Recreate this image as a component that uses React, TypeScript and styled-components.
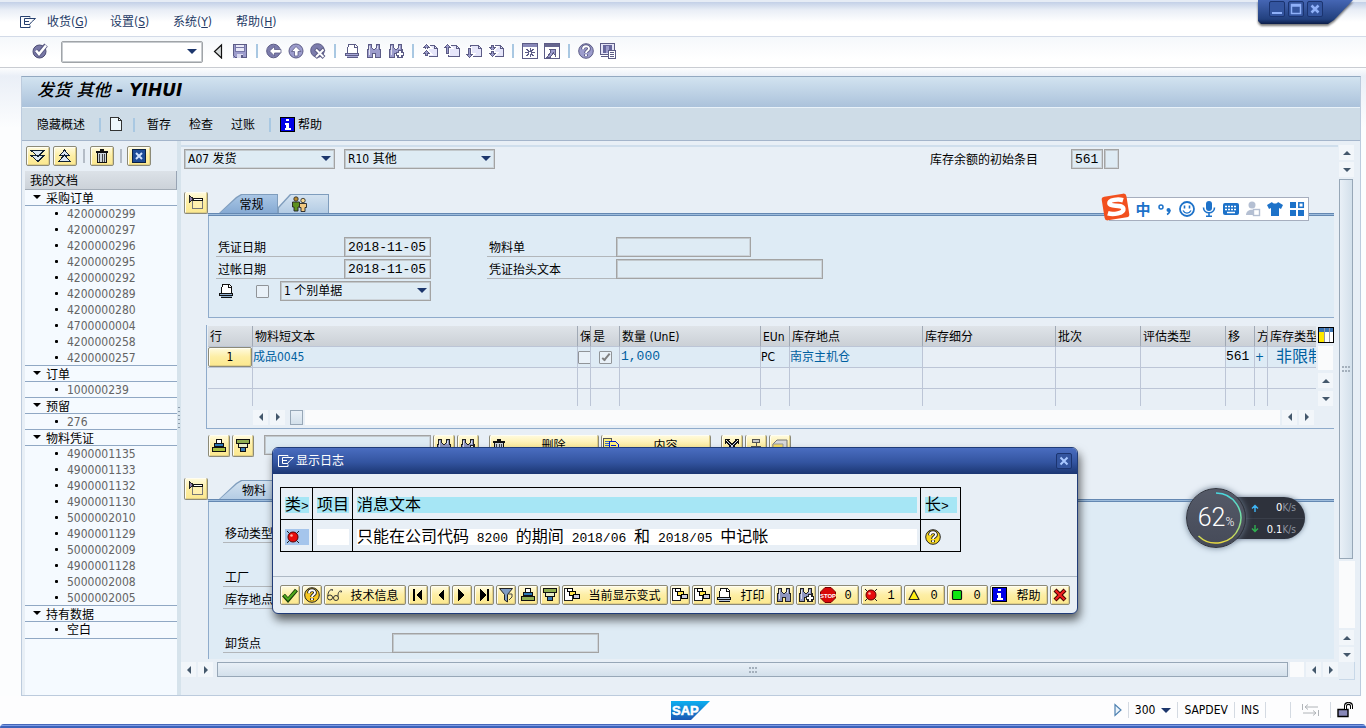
import React from 'react';
import styled, { createGlobalStyle, css } from 'styled-components';

const UI = `"DejaVu Sans Condensed", "DejaVu Sans", "Noto Sans CJK SC", sans-serif`;
const MONO = `"Liberation Mono", "Noto Sans CJK SC", monospace`;

const Global = createGlobalStyle`
  *, *::before, *::after { box-sizing: border-box; }
  body { margin: 0; background: #fdfdfe; color: #000; font: 12px/16px ${UI}; }
  button, input, select { font: inherit; color: inherit; margin: 0; padding: 0; border-radius: 0; }
  button { background: none; border: 0; cursor: pointer; white-space: nowrap; }
  svg { display: block; flex: none; }
  ul { list-style: none; margin: 0; padding: 0; }
`;

/* ---------- icons ---------- */

const Svg = ({ w = 16, h = 16, crisp = false, children }: { w?: number; h?: number; crisp?: boolean; children: React.ReactNode }) => (
  <svg width={w} height={h} viewBox={`0 0 ${w} ${h}`} fill="none" shapeRendering={crisp ? 'crispEdges' : 'auto'} aria-hidden="true">
    {children}
  </svg>
);

const P = '#9c9ccc';
const D = '#5c5c86';

const MenuIcon = ({ color = '#26406f' }: { color?: string }) => (
  <Svg h={14}>
    <path d="M10 2.5V1.5H.5v11h9.500v-2" stroke={color} />
    <path d="M12 3.5H4.5v6H10M5 6.5h4M12 3.5h3.500l-4 3.500-2 2.500" stroke={color} />
  </Svg>
);
const EnterIcon = () => (
  <Svg>
    <circle cx="7.5" cy="8.5" r="6.5" fill="#7878a6" stroke="#4b4b73" />
    <path d="M4 7.5l3 3.500 7-9" stroke={D} strokeWidth="4.5" />
    <path d="M4 7.5l3 3.500 7-8.500" stroke="#fff" strokeWidth="2.5" />
  </Svg>
);
const CollapseIcon = () => (
  <Svg><path d="M11.5 2v13L4.5 8.500z" fill="#d8dcdc" stroke="#111" strokeWidth="1.2" /></Svg>
);
const SaveIcon = () => (
  <Svg crisp>
    <path d="M1 1h14v14H1z" fill={P} /><path d="M1.5 1.5h13v13H3.500l-2-2z" stroke={D} />
    <path d="M4 2h8v6H4z" fill="#e9e9f8" /><path d="M3.5 2v6.500h9V2M4 4.500h8" stroke="#7777a8" />
    <path d="M5 11h6v4H5z" fill="#dcdcf0" /><path d="M9 12h2v3H9z" fill={D} />
  </Svg>
);
const BackIcon = () => (
  <Svg><circle cx="7.5" cy="8" r="6.8" fill="#7c7cac" stroke={D} />
    <path d="M3.500 8l5-4.500v3H15v3.500H8.500v3z" fill="#fff" stroke={D} strokeWidth=".8" /></Svg>
);
const ExitIcon = () => (
  <Svg><circle cx="8" cy="8" r="7" fill={P} stroke={D} />
    <path d="M8 3.500l5 5h-3V13H6.500V8.500H3.500z" fill="#fff" stroke={D} strokeWidth=".8" /></Svg>
);
const CancelIcon = () => (
  <Svg><circle cx="7.5" cy="7.5" r="6.8" fill="#7c7cac" stroke={D} />
    <path d="M5.500 6l8.500 8.500M14 6l-8.500 8.500" stroke={D} strokeWidth="4" /><path d="M6 6.500l7.500 7.500M13.500 6.500L6 14" stroke="#fff" strokeWidth="2" /></Svg>
);
const PrintIcon = ({ c = D, f = '#a8a8d8' }: { c?: string; f?: string }) => (
  <Svg crisp>
    <path d="M4.5 1.500h7l2 2V10h-10V6z" fill="#fff" stroke={c} /><path d="M10.500 1.500v3h3" stroke={c} />
    <path d="M1.500 10.500h13v2h-13z" fill={f} stroke={c} /><path d="M2.500 14.500h11" stroke={c} /><path d="M2.500 13.500h11" stroke={f} />
  </Svg>
);
const FindIcon = ({ plus, c = D, f = P }: { plus?: boolean; c?: string; f?: string }) => (
  <Svg crisp>
    <path d="M2.500 1.500h3v3l2 2h1l2-2v-3h3v4l1 2v7h-5v-4h-3v4h-5v-7l1-2z" fill={f} stroke={c} />
    <path d="M3.500 3v9M11.500 3v3" stroke="#fff" opacity=".7" />
    {plus && <path d="M10.500 7.500h3v2h2v3h-2v2h-3v-2h-2v-3h2z" fill="#fff" stroke={c} />}
  </Svg>
);
const PageNavIcon = ({ children }: { children: React.ReactNode }) => (
  <Svg crisp>
    <path d="M4.500 2.500h8l3 3v8h-11z" fill="#e6e6fa" stroke={D} /><path d="M12.500 2.500v3h3" stroke={D} />
    {children}
  </Svg>
);
const Chevron = ({ d }: { d: string }) => (
  <><path d={d} stroke="#fff" strokeWidth="3" /><path d={d} fill={P} stroke={D} /></>
);
const FIRST_A = 'M4.500 1.500l-3 3h2v2h2v-2h2z';
const FIRST_B = 'M4.500 7.500l-3 3h2v2h2v-2h2z';
const PREV = 'M3.500 1.500l-3 3h2v6h2v-6h2z';
const NEXT = 'M3.500 14.500l-3-3h2v-6h2v6h2z';
const LAST_A = 'M4.500 7.500l-3-3h2v-2h2v2h2z';
const LAST_B = 'M4.500 13.500l-3-3h2v-2h2v2h2z';
const SessionIcon = () => (
  <Svg crisp><path d="M.500 .500h15v15H.500z" fill="#fff" stroke={D} /><path d="M1 1h14v3H1z" fill="#8888b8" />
    <path d="M8 5v9M3 9.500h10M4.500 6l7 7M11.500 6l-7 7" stroke={D} /><path d="M7 8.500h2v2H7z" fill="#fff" /></Svg>
);
const ShortcutIcon = () => (
  <Svg crisp><path d="M.500 .500h15v15H.500z" fill="#fff" stroke={D} /><path d="M1 1h14v3H1z" fill="#66668f" />
    <path d="M5.500 6.500H11v5.500l-1.500-2-3 4H3l4-5z" fill={P} stroke={D} /></Svg>
);
const HelpIcon = ({ c = D, f = P }: { c?: string; f?: string }) => (
  <Svg><circle cx="8" cy="8" r="7.3" fill={f} stroke={c} />
    <path d="M5 6.300c0-4 6-4 6-.6 0 2.200-3 2-3 4.300M8 11.200v2" stroke={c} strokeWidth="3.8" />
    <path d="M5 6.300c0-4 6-4 6-.6 0 2.200-3 2-3 4.300M8 11.300v1.800" stroke="#fff" strokeWidth="1.9" /></Svg>
);
const LayoutIcon = () => (
  <Svg crisp><path d="M.500 .500h14v11H.500z" fill="#e4e4f6" stroke={D} /><path d="M3 2h9v8H3z" fill="#66669c" /><path d="M6 3h3v7H6z" fill={P} />
    <path d="M1 13.500h7" stroke={D} /><path d="M8.500 7.500h7v8h-7z" fill="#fff" stroke={D} /><path d="M10 9.500h4M10 11.500h4M10 13.500h4" stroke={D} /></Svg>
);
const NewPageIcon = () => (
  <Svg w={13} h={16} crisp><path d="M.500 .500h8l3 3v10H.500z" fill="#eef8fc" stroke="#333" /><path d="M8.500 .500v3h3" stroke="#333" /></Svg>
);
const InfoIcon = () => (
  <Svg crisp><path d="M.500 .500h14v14H.500z" fill="#0000e8" stroke="#000" /><path d="M6 2h3v2H6zM5 6h4v5h2v2H5v-2h1V8H5z" fill="#fff" /></Svg>
);
const ExpandIcon = () => (
  <Svg crisp><path d="M1 2.500h13l-6 6zM1 7.500h13l-6 6z" fill="#dce8f4" stroke="#123" /></Svg>
);
const ShrinkIcon = () => (
  <Svg crisp><path d="M7.500 2L12 7.500H3zM7.500 7l6 6.500h-12z" fill="#dce8f4" stroke="#123" /></Svg>
);
const TrashIcon = () => (
  <Svg crisp><path d="M3.500 4.500h9v10h-9z" fill="#ccd4dc" stroke="#111" /><path d="M2 3.500h12M6 1.500h4" stroke="#111" strokeWidth="2" />
    <path d="M5.500 6v8M8 6v8M10.500 6v8" stroke="#444" /></Svg>
);
const CloseBoxIcon = () => (
  <Svg crisp><path d="M1.500 1.500h13v13h-13z" fill="#1e4c98" stroke="#0b2144" /><path d="M5 5l6 6M11 5l-6 6" stroke="#cfe2ff" strokeWidth="2" shapeRendering="auto" /></Svg>
);
const HeaderToggleIcon = () => (
  <Svg crisp><path d="M4.500 5.500h10v8h-10z" fill="#fff0b0" stroke="#777" /><path d="M4.500 3.500h10v2h-10z" fill="#fff" stroke="#111" />
    <path d="M1.500 .500v7l4-3.500z" fill="#8c7aa8" stroke="#222" /></Svg>
);
const PeopleIcon = () => (
  <Svg w={18}>
    <circle cx="5" cy="3" r="2.2" fill="#b88a30" stroke="#222" strokeWidth=".8" /><path d="M1.500 6h7v5H7v4H3v-4H1.500z" fill="#5c9020" stroke="#222" strokeWidth=".9" />
    <circle cx="12" cy="4.5" r="2.2" fill="#f6d890" stroke="#222" strokeWidth=".8" /><path d="M8.500 7.500h7v4H14v4h-4v-4H8.500z" fill="#f0c880" stroke="#222" strokeWidth=".9" />
  </Svg>
);
const SortAscIcon = ({ b = '#8fae52' }: { b?: string }) => (
  <Svg crisp><path d="M5.500 1.500h5v4h-5z" fill="#fff" stroke="#111" /><path d="M3.500 5.500h9v3h-9z" fill="#2c78b8" stroke="#111" />
    <path d="M1.500 9.500h13v4h-13z" fill={b} stroke="#111" /></Svg>
);
const SortDescIcon = () => (
  <Svg crisp><path d="M1.500 1.500h13v4h-13z" fill="#8fae52" stroke="#111" /><path d="M3.500 5.500h9v4h-9z" fill="#e8efc8" stroke="#111" />
    <path d="M5.500 9.500h5v4h-5z" fill="#3a7cb8" stroke="#111" /></Svg>
);
const CopyIcon = () => (
  <Svg crisp><path d="M.500 .500h8v13h-8z" fill="#fff27a" stroke="#555" /><path d="M2 3h5M2 5h5M2 7h5M2 9h5" stroke="#36c" />
    <path d="M6.500 3.500h6l3 3v8h-9z" fill="#fff27a" stroke="#0018d0" /><path d="M8 7h5M8 9h5M8 11h5" stroke="#0018d0" /></Svg>
);
const CrossArrowsIcon = () => (
  <Svg crisp><path d="M3 3l10 10M13 3L3 13" stroke="#111" strokeWidth="3" /><path d="M3 3l10 10M13 3L3 13" stroke="#cdd8f0" />
    <path d="M1.500 5.500v-4h4M10.500 1.500h4v4M1.500 10.500v4h4M14.500 10.500v4h-4" stroke="#111" /></Svg>
);
const HierIcon = () => (
  <Svg crisp><path d="M4.500 1.500h7v3h-7zM1.500 10.500h5v3h-5zM9.500 10.500h5v3h-5z" fill="#c8c8c8" stroke="#555" /><path d="M8 5v3M3.500 10V8h9v2" stroke="#555" /></Svg>
);
const BoxIcon = () => (
  <Svg><path d="M1 6l4-4h10v8l-4 4H1z" fill="#d8d8d8" stroke="#777" /><path d="M1 6h10v8H1z" fill="#f6dc60" stroke="#999" /><path d="M4 10h5v2H4z" fill="#e07050" /></Svg>
);
const TableCfgIcon = () => (
  <Svg crisp><path d="M.500 .500h15v15H.500z" fill="#fff" stroke="#000" /><path d="M1 1h14v4H1z" fill="#3a74b4" /><path d="M1 5h5v10H1z" fill="#ffe800" />
    <path d="M6.500 1v14M11.500 1v14" stroke="#99a" /></Svg>
);
const CheckIcon = () => (
  <Svg><path d="M1.500 8l4.500 5L14.500 3" stroke="#163c08" strokeWidth="4" /><path d="M2 8.300l4 4.200L14 3.500" stroke="#4fa81c" strokeWidth="2" /></Svg>
);
const GlassesIcon = () => (
  <Svg><circle cx="4" cy="10.5" r="2.5" stroke="#333" /><circle cx="10" cy="11" r="2.5" stroke="#333" /><path d="M6.500 10.500h1M1.800 9C2 5 4 2 6.500 2.500L6 4M12 9.500c0-3 .5-6 3.500-5.500L15 5.500" stroke="#333" /></Svg>
);
const PlayIcon = ({ left, bar }: { left?: boolean; bar?: boolean }) => (
  <Svg crisp>
    {left ? <path d="M12 2v12L6 8z" fill="#000" /> : <path d="M4 2v12l6-6z" fill="#000" />}
    {bar && <path d={left ? 'M3 2h2v12H3z' : 'M11 2h2v12h-2z'} fill="#000" />}
  </Svg>
);
const FilterIcon = () => (
  <Svg><path d="M1.500 1.500h13l-5 6V15l-3-2V7.500z" fill="#7f9cc4" stroke="#222" /><path d="M10 7h4v3l-3 3" stroke="#444" /></Svg>
);
const StackIcon = () => (
  <Svg crisp><path d="M.500 1.500h4v3h4v9h-8z" fill="#fff" stroke="#222" /><path d="M3.500 1.500h5v3h-5z" fill="#fff" stroke="#000" />
    <path d="M5.500 4.500h6v4h-6z" fill="#ffe24a" stroke="#000" /><path d="M9.500 7.500h6v4h-6z" fill="#ccd" stroke="#000" /></Svg>
);
const StopIcon = () => (
  <Svg><path d="M5 .500h6L15.500 5v6L11 15.500H5L.500 11V5z" fill="#d80808" stroke="#700" />
    <text x="8" y="10.500" fontSize="6" fontWeight="700" fill="#fff" textAnchor="middle" fontFamily="Liberation Sans, sans-serif">STOP</text></Svg>
);
const ErrorIcon = () => (
  <Svg><path d="M2 2l3 3M14 2l-3 3M2 14l3-3M14 14l-3-3" stroke="#222" /><circle cx="8" cy="8" r="5" fill="#e80c0c" stroke="#5c0000" /><circle cx="6.5" cy="6.5" r="1.3" fill="#ffb0a0" /></Svg>
);
const WarnIcon = () => (<Svg><path d="M8 3l5 9.500H3z" fill="#ffee10" stroke="#222" strokeWidth="1.2" strokeLinejoin="round" /></Svg>);
const OkIcon = () => (<Svg><rect x="3.5" y="3.5" width="9" height="9" rx="1" fill="#10e810" stroke="#111" strokeWidth="1.2" /></Svg>);
const RedXIcon = () => (
  <Svg><path d="M3 3l10 10M13 3L3 13" stroke="#400" strokeWidth="4.2" /><path d="M3.500 3.500l9 9M12.500 3.500l-9 9" stroke="#f02020" strokeWidth="2.2" /></Svg>
);
const SapLogo = () => (
  <Svg w={39} h={19}>
    <defs><linearGradient id="sap" x1="0" y1="0" x2="0" y2="1"><stop offset="0" stopColor="#0aaef0" /><stop offset="1" stopColor="#1c58b4" /></linearGradient></defs>
    <path d="M0 0h39L20 19H0z" fill="url(#sap)" />
    <text x="1" y="14" fontSize="13" fontWeight="700" fill="#fff" stroke="#fff" strokeWidth=".5" fontFamily="Liberation Sans, sans-serif">SAP</text>
  </Svg>
);
const SendIcon = () => (<Svg w={8} h={14}><path d="M1 1.500v11L7 7z" fill="#eaf3fb" stroke="#4d80b0" strokeWidth="1.2" /></Svg>);
const SwapIcon = () => (<Svg w={17} h={14}><path d="M.500 1v6M3 4h13M6 1.500L3 4l3 2.500M16.500 7v6M1 10h13M11 7.500l3 2.500-3 2.500" stroke="#b0b4b8" /></Svg>);
const LockIcon = () => (
  <Svg w={17}><path d="M1 7.500h10v7H1z" fill="#8888b8" stroke="#000" strokeWidth="1.4" /><path d="M8.500 7V4c0-3.500 6-3.500 6 0v3" stroke="#000" strokeWidth="3" /><path d="M8.500 7V4c0-3.500 6-3.500 6 0v3" stroke="#fff" /></Svg>
);

/* ---------- shared parts ---------- */

const yellow = css`
  background: linear-gradient(#fffbe0, #fdeea4 50%, #fce88e);
  border: 1px solid #8c8a78;
  border-radius: 2px;
  box-shadow: inset 1px 1px 0 #fffdf0, inset -1px -1px 0 #e0cf86;
`;
const YellowButton = styled.button<{ $w: number; $open?: boolean }>`
  ${yellow}
  width: ${p => p.$w}px;
  height: ${p => (p.$open ? 22 : 20)}px;
  flex: none;
  display: flex;
  align-items: center;
  justify-content: center;
  ${p => p.$open && 'border-top: 0;'}
`;
const LabelledButton = styled(YellowButton)`
  justify-content: flex-start;
  padding: 0 1px;
  & > span { flex: 1; text-align: center; padding: 1px 0 0 3px; }
`;
const CountButton = styled(LabelledButton)`font-family: ${MONO};`;

const Separator = styled.span`
  width: 12px;
  height: 14px;
  flex: none;
  background: linear-gradient(#a9c8e2, #a9c8e2) center / 2px 100% no-repeat;
`;

const fieldLook = css`
  height: 20px;
  background: #deebf4;
  border: 1px solid #a3a3a3;
  box-shadow: inset 1px 1px 0 #c2c8cc, inset -1px -1px 0 #cdd4da;
  outline: 0;
`;
const Field = styled.input<{ $w: number }>`
  ${fieldLook}
  width: ${p => p.$w}px;
  flex: none;
  padding: 0 3px;
  font: 13px/16px ${MONO};
`;
const SelectWrap = styled.span<{ $w: number }>`
  position: relative;
  display: block;
  flex: none;
  width: ${p => p.$w}px;
  &::after {
    content: '';
    position: absolute;
    right: 4px;
    top: 7px;
    border: 5px solid transparent;
    border-top-color: #1c366c;
    border-bottom: 0;
    pointer-events: none;
  }
  select { ${fieldLook} appearance: none; width: 100%; padding: 0 3px; }
`;
const Select = ({ w, label, value }: { w: number; label: string; value: string }) => (
  <SelectWrap $w={w}><select aria-label={label} defaultValue={value}><option>{value}</option></select></SelectWrap>
);
const Check = styled.input`
  appearance: none;
  position: relative;
  display: block;
  flex: none;
  width: 13px;
  height: 13px;
  border: 1px solid #909498;
  border-radius: 1px;
  background: #e9f1f8;
  &:checked::after {
    content: '';
    position: absolute;
    left: 4px;
    top: 0;
    width: 4px;
    height: 9px;
    border: solid #808080;
    border-width: 0 2px 2px 0;
    rotate: 40deg;
  }
`;

/* ---------- window chrome ---------- */

const Page = styled.div`
  position: relative;
  min-height: 100vh;
  min-width: 1100px;
  display: flex;
  flex-direction: column;
  overflow: hidden;
`;
const MenuBar = styled.nav`
  height: 37px;
  padding: 5px 0 0 20px;
  display: flex;
  align-items: center;
  border-top: 2px solid #e6ecf5;
  border-bottom: 1px solid #d3dbe8;
  background: linear-gradient(#c3d0e7, #e9eef6 8px, #fff 20px);
  color: #243a66;
`;
const MenuItem = styled.button`
  width: 63px;
  height: 20px;
  text-align: left;
  &:first-of-type { margin-left: 11px; }
`;
const Toolbar = styled.div`
  height: 31px;
  padding: 0 0 2px 29px;
  display: flex;
  align-items: center;
  border-bottom: 1px solid #c9ccd2;
  background: linear-gradient(#f5f8fb, #fff 22px);
`;
const IconButton = styled.button`
  width: 22px;
  height: 22px;
  display: grid;
  place-items: center;
`;
const Command = styled.span`
  position: relative;
  width: 142px;
  margin: 2px 4px 0 10px;
  input { width: 100%; height: 22px; display: block; border: 1px solid #a0a4a8; box-shadow: inset 0 0 0 1px #c8ccd0; border-radius: 2px; background: #fff; outline: 0; padding: 0 4px; }
  &::after { content: ''; position: absolute; right: 6px; top: 8px; border: 5px solid transparent; border-top-color: #1c366c; border-bottom: 0; }
`;
const WindowTab = styled.div`
  position: absolute;
  right: 13px;
  top: 0;
  width: 95px;
  height: 24px;
  filter: drop-shadow(0 2px 1px #0008);
`;
const WindowShape = styled.div`
  height: 100%;
  padding: 1px 0 0 11px;
  display: flex;
  gap: 3px;
  background: linear-gradient(#4566b4, #22407e 80%, #0c1d48);
  clip-path: polygon(0 0, 100% 0, 76px 20px, 70px 24px, 3px 24px, 0 21px);
`;
const WinButton = styled.button`
  width: 16px;
  height: 16px;
  border: 1px solid #1b3470;
  border-radius: 2px;
  background: #34559f;
  display: grid;
  place-items: center;
`;
const Gap = styled.div`
  flex: 1;
  display: flex;
  flex-direction: column;
  background: linear-gradient(#fcfdfe, #eaeff7 8px, #fcfdfe 60px);
`;
const Frame = styled.main`
  flex: 1;
  margin: 8px 5px 0 21px;
  display: flex;
  flex-direction: column;
  border: 1px solid #bccbdd;
  border-top-color: #93a9c1;
  background: #e8eff6;
`;
const TitleBar = styled.h1`
  margin: 0;
  height: 31px;
  padding: 0 15px;
  font: italic bold 17px/27px "DejaVu Sans", "Noto Sans CJK SC", sans-serif;
  border-bottom: 1px solid #e9f2f9;
  background: linear-gradient(#d2e3f0, #abc2db);
  span { font-weight: 500; }
`;
const AppToolbar = styled.div`
  height: 33px;
  padding: 1px 0 0 15px;
  display: flex;
  align-items: center;
  background: #cedce7;
  border-bottom: 1px solid #a4b5cb;
`;
const TextButton = styled.button<{ $before?: number; $after?: number }>`
  height: 22px;
  display: flex;
  align-items: center;
  gap: 2px;
  margin: 0 ${p => p.$after ?? 18}px 0 ${p => p.$before ?? 0}px;
`;
const Body = styled.div`flex: 1; display: flex;`;

/* ---------- left tree ---------- */

const Side = styled.aside`
  width: 155px;
  flex: none;
  display: flex;
  flex-direction: column;
  padding-left: 3px;
`;
const SideTools = styled.div`
  height: 30px;
  padding: 5px 0 5px 1px;
  display: flex;
  gap: 3px;
`;
const SideSep = styled.i`width: 2px; height: 14px; margin: 3px 2px 3px 3px; background: #b4bcc6; flex: none;`;
const SideHeader = styled.div`
  height: 19px;
  padding: 2px 5px 0;
  background: linear-gradient(#dce2e8, #ccd2d9);
  border-right: 1px solid #98a4b4;
  border-bottom: 1px solid #a3acb6;
`;
const Tree = styled.div`flex: 1; background: #f5faff;`;
const Branch = styled.div`
  &:not(:first-child) { margin-top: -1px; border-top: 1px solid #90a8c4; }
  &:last-child { border-bottom: 1px solid #90a8c4; }
`;
const Node = styled.div`
  height: 16px;
  padding-left: 21px;
  line-height: 18px;
  border-bottom: 1px solid #90a8c4;
  position: relative;
  &::before { content: ''; position: absolute; left: 8px; top: 5px; border: 4px solid transparent; border-top-color: #000; border-bottom: 0; }
`;
const Leaf = styled.li<{ $dark?: boolean }>`
  height: 16px;
  line-height: 17px;
  padding-left: 42px;
  color: ${p => (p.$dark ? '#000' : '#646464')};
  position: relative;
  &::before { content: ''; position: absolute; left: 30px; top: 6px; width: 3px; height: 3px; border-radius: 1px; background: #000; }
`;
const Splitter = styled.div`
  width: 4px;
  flex: none;
  background: #d6e3ec;
  display: grid;
  place-items: center;
  &::after { content: ''; width: 2px; height: 22px; background: repeating-linear-gradient(#8c9cac 0 1px, transparent 1px 4px); }
`;

/* ---------- right work area ---------- */

const Work = styled.div`
  flex: 1;
  min-width: 0;
  display: grid;
  grid-template: 1fr 18px / 1fr 16px;
  column-gap: 1px;
  padding: 4px 5px 15px 0;
`;
const Scroll = styled.div`
  min-width: 0;
  padding-left: 3px;
  margin-bottom: 3px;
  border-top: 2px solid #cfdeec;
  display: flex;
  flex-direction: column;
`;
const Inner = styled.div`flex: 1; display: flex; flex-direction: column; margin-right: 4px; min-width: 0;`;
const SelectRow = styled.div`
  display: flex;
  gap: 9px;
  margin: 2px 0 23px;
  padding-right: 215px;
`;
const InitialEntry = styled.div`
  margin-left: auto;
  display: flex;
  align-items: center;
  label { margin-right: 33px; padding-top: 2px; }
  input + input { margin-left: 1px; }
`;
const Section = styled.section<{ $grow?: boolean }>`
  display: grid;
  grid-template-columns: 24px 1fr;
  align-items: stretch;
  ${p => p.$grow && 'flex: 1;'}
`;
const TabArea = styled.div`display: flex; flex-direction: column;`;
const Tabs = styled.div`
  height: 21px;
  padding-left: 11px;
  display: flex;
  align-items: flex-end;
`;
const Tab = styled.button<{ $w: number; $on?: boolean; $second?: boolean }>`
  position: relative;
  width: ${p => p.$w}px;
  height: 19px;
  padding: ${p => (p.$second ? '0 8px 0 0' : '2px 0 0 6px')};
  display: grid;
  place-items: center;
  background: #7f9dbd;
  --cut: ${p => (p.$second ? 'polygon(0 100%, 0 13px, 12px 0, 100% 0, 100% 100%)' : 'polygon(0 100%, 17px 3px, 22px 0, 100% 0, 100% 100%)')};
  clip-path: var(--cut);
  &::before {
    content: '';
    position: absolute;
    inset: 1px 1px 0 1px;
    clip-path: var(--cut);
    background: ${p => (p.$on ? 'linear-gradient(#a9c6e5, #86aad3)' : 'linear-gradient(#d3e2f0, #b4cce4)')};
  }
  & > * { position: relative; }
`;
const Panel = styled.div<{ $open?: boolean }>`
  flex: 1;
  background: #deebf5;
  border-left: 1px solid #8fabcb;
  border-bottom: ${p => (p.$open ? 0 : 1)}px solid #8fabcb;
  padding: ${p => (p.$open ? '21px 0 6px 14px' : '21px 0 16px 7px')};
  display: grid;
  grid-auto-rows: 20px;
  row-gap: 2px;
`;
const TabLine = styled.div`
  height: 3px;
  background: #9dbcdc;
  border: solid #6488b2;
  border-width: 1px 0;
`;
const FormRow = styled.div`display: flex; align-items: stretch;`;
const Label = styled.label<{ $w: number; $gap?: number }>`
  width: ${p => p.$w}px;
  margin-left: ${p => p.$gap ?? 0}px;
  padding: 3px 2px 0;
  border-bottom: 1px solid #b2b6ba;
`;
const PrintRow = styled(FormRow)`
  align-items: center;
  padding-left: 2px;
  input { margin: 0 11px 0 22px; }
`;

const GridBox = styled.div`
  margin: 7px 0 6px 22px;
  padding: 1px 0 3px 1px;
  border-left: 1px solid #8fabcb;
  border-bottom: 1px solid #8fabcb;
`;
const GridTop = styled.div`display: flex; height: 80px; overflow: hidden;`;
const Items = styled.table`
  flex: 1;
  min-width: 0;
  width: 0;
  table-layout: fixed;
  border-collapse: separate;
  border-spacing: 0;
  th, td {
    height: 21px;
    padding: 0;
    border-right: 1px solid #bcc5d6;
    border-bottom: 1px solid #bcc5d6;
    text-align: left;
    font-weight: 400;
    white-space: nowrap;
    overflow: hidden;
  }
  th { padding: 1px 0 0 2px; background: linear-gradient(#dfe4e9, #cbd0d6); border-right-color: #a0a9b5; }
  th:last-child, td:last-child { border-right: 0; }
  tr:last-child td { border-bottom: 0; height: 18px; }
`;
const Col = styled.col<{ $w?: number }>`${p => p.$w && `width: ${p.$w}px;`}`;
const Cell = styled.td<{ $mono?: boolean; $large?: boolean; $dark?: boolean; $indent?: number }>`
  background: #deebf5;
  color: ${p => (p.$dark ? '#000' : '#0060a0')};
  &&& { padding-left: ${p => p.$indent ?? 0}px; }
  ${p => p.$mono && `font: 13px/16px ${MONO};`}
  ${p => p.$large && 'font-size: 16px;'}
`;
const GridSide = styled.div`
  width: 18px;
  padding: 1px 0 0 2px;
  flex: none;
  display: flex;
  flex-direction: column;
  gap: 3px;
`;
const SideTrack = styled.div`height: 24px; width: 15px; background: #fafbfc;`;
const ArrowBtn = styled.button<{ $dir: 'up' | 'down' | 'left' | 'right' }>`
  width: 15px;
  height: 15px;
  flex: none;
  background: #f2f6fa;
  display: grid;
  place-items: center;
  &::after {
    content: '';
    border: 4px solid transparent;
    border-${p => ({ up: 'bottom', down: 'top', left: 'right', right: 'left' })[p.$dir]}-color: #44586c;
    border-${p => ({ up: 'top', down: 'bottom', left: 'left', right: 'right' })[p.$dir]}-width: 0;
  }
`;
const HBar = styled.div<{ $inset?: boolean }>`
  display: flex;
  align-items: ${p => (p.$inset ? 'center' : 'flex-start')};
  gap: 2px;
  height: ${p => (p.$inset ? 16 : 18)}px;
  ${p => p.$inset && 'margin: 3px 20px 0 45px;'}
`;
const VBar = styled.div`
  display: flex;
  flex-direction: column;
  gap: 2px;
`;
const HThumb = styled.div<{ $small?: boolean }>`
  ${p => (p.$small ? 'width: 13px; margin-left: 3px;' : 'flex: 1; margin-left: 2px;')}
  height: 15px;
  border: 1px solid #97a7b7;
  background: linear-gradient(#e9f0f7, #d3e0eb);
  display: grid;
  place-items: center;
`;
const VThumb = styled.div`
  flex: 381;
  width: 14px;
  border: 1px solid #97a7b7;
  background: linear-gradient(90deg, #e9f0f7, #d3e0eb);
  display: grid;
  place-items: center;
`;
const VTrack = styled.div`flex: 67; background: #fafbfc;`;
const HTrack = styled.div<{ $w?: number }>`${p => (p.$w ? `width: ${p.$w}px;` : 'flex: 1;')} height: 15px; background: #fafbfc;`;
const Grip = styled.span`
  width: 8px;
  height: 6px;
  background:
    repeating-linear-gradient(90deg, #a4b0bc 0 2px, transparent 2px 3px) 0 0 / 8px 2px no-repeat,
    repeating-linear-gradient(90deg, #a4b0bc 0 2px, transparent 2px 3px) 0 4px / 8px 2px no-repeat;
`;
const Corner = styled.div`border: solid #c8d8e8; border-width: 0 1px 1px 0;`;
const ActionRow = styled.div`
  display: flex;
  gap: 2px;
  padding-left: 24px;
  margin-bottom: 21px;
  & > input { margin-left: 8px; }
  .lead { margin-left: 8px; }
`;

/* ---------- dialog ---------- */

const Dialog = styled.div`
  position: absolute;
  left: 272px;
  top: 447px;
  width: 806px;
  border: 1px solid #203c78;
  border-radius: 6px;
  background: #e8eff6;
  box-shadow: 2px 6px 10px #0009;
  overflow: hidden;
`;
const DialogTitle = styled.div`
  height: 26px;
  padding: 0 5px;
  display: flex;
  align-items: center;
  gap: 2px;
  color: #fff;
  background: linear-gradient(#4a6dc0, #3354a0 55%, #1b3672);
  button { margin-left: auto; }
`;
const LogArea = styled.div`padding: 13px 7px 24px;`;
const LogTable = styled.table`
  table-layout: fixed;
  width: 681px;
  border-collapse: collapse;
  font-size: 16px;
  line-height: 16px;
  th, td { height: 32px; border: 1px solid #000; padding: 3px 3px 0 4px; text-align: left; font-weight: 400; white-space: nowrap; }
`;
const Fill = styled.div<{ $c: string }>`
  height: 16px;
  background: ${p => p.$c};
`;
const Half = styled.span`font: 13px/16px ${MONO}; white-space: pre;`;
const DialogButtons = styled.div`
  display: flex;
  gap: 2px;
  padding: 8px 7px;
  border-top: 1px solid #aeb9c5;
`;

/* ---------- floating widgets ---------- */

const Ime = styled.div`
  position: absolute;
  right: 57px;
  top: 197px;
  height: 24px;
  padding-left: 22px;
  display: flex;
  align-items: center;
  background: #fff;
  border: 1px solid #a6aebe;
  color: #1d72c9;
  button { width: 22px; height: 22px; display: grid; place-items: center; }
`;
const ImeLogo = styled.span`position: absolute; left: -9px; top: -5px;`;
const ImeMode = styled.button`font: bold 15px/22px "Noto Sans CJK SC", sans-serif;`;
const Meter = styled.div`
  position: absolute;
  right: 61px;
  top: 488px;
  display: flex;
  align-items: center;
`;
const Gauge = styled.div`
  width: 60px;
  height: 60px;
  border-radius: 50%;
  background: linear-gradient(#555a68, #454a58);
  border: 1px solid #30343e;
  box-shadow: 0 0 6px #6b7c90;
  position: relative;
  z-index: 1;
  display: flex;
  align-items: baseline;
  justify-content: center;
  color: #fff;
  font: 300 25px/58px Roboto, sans-serif;
  small { font-size: 12px; }
  svg { position: absolute; inset: 0; }
`;
const Rates = styled.div`
  margin-left: -14px;
  width: 73px;
  height: 42px;
  border-radius: 0 21px 21px 0;
  background: #2e323c;
  box-shadow: 0 0 5px #6b7c90;
  color: #fff;
  font-size: 11px;
  line-height: 21px;
  div { display: flex; align-items: center; height: 21px; padding: 0 9px 0 19px; justify-content: space-between; }
  div + div { border-top: 1px solid #3a3f4a; }
  small { font-size: 10px; color: #8d929e; }
`;

/* ---------- status bar ---------- */

const Status = styled.footer`
  height: 28px;
  display: grid;
  grid-template-columns: 1fr auto 1fr;
  align-items: center;
  background: #fdfdfe;
`;
const LogoSlot = styled.div`grid-column: 2; margin-left: 15px;`;
const StatusRight = styled.div`
  justify-self: end;
  display: flex;
  align-items: center;
  padding-right: 12px;
  gap: 6px;
  height: 28px;
`;
const Bar = styled.i<{ $far?: boolean }>`width: 1px; height: 16px; background: #d4dae2; ${p => p.$far && 'margin-left: 18px;'}`;
const Caret = styled.i`border: 5px solid transparent; border-top-color: #1c366c; border-bottom: 0;`;
const SwapSlot = styled.span`padding: 0 5px;`;
const BottomEdge = styled.div`height: 4px; background: linear-gradient(#4767b8 1px, #7c9ce6 1px 2px, #3d62ba 2px); border-radius: 4px 4px 0 0;`;

/* ---------- data ---------- */

const tree = [
  { name: '采购订单', items: ['4200000299', '4200000297', '4200000296', '4200000295', '4200000292', '4200000289', '4200000280', '4700000004', '4200000258', '4200000257'] },
  { name: '订单', items: ['100000239'] },
  { name: '预留', items: ['276'] },
  { name: '物料凭证', items: ['4900001135', '4900001133', '4900001132', '4900001130', '5000002010', '4900001129', '5000002009', '4900001128', '5000002008', '5000002005'] },
  { name: '持有数据', items: ['空白'] },
];
const columns: [string, number | undefined][] = [
  ['行', 45], ['物料短文本', undefined], ['保', 13], ['是', 29], ['数量 (UnE)', 141], ['EUn', 29], ['库存地点', 133],
  ['库存细分', 133], ['批次', 85], ['评估类型', 85], ['移', 29], ['方', 13], ['库存类型', 48],
];

export default function App() {
  return (
    <Page>
      <Global />
      <MenuBar>
        <MenuIcon />
        {[['收货', 'G'], ['设置', 'S'], ['系统', 'Y'], ['帮助', 'H']].map(([t, k]) => (
          <MenuItem key={k}>{t}(<u>{k}</u>)</MenuItem>
        ))}
      </MenuBar>
      <WindowTab>
        <WindowShape>
          <WinButton aria-label="最小化"><Svg w={12} h={12}><path d="M1 10h10" stroke="#8fb0f8" strokeWidth="2" /></Svg></WinButton>
          <WinButton aria-label="最大化"><Svg w={12} h={12}><path d="M1.500 1.500h9v9h-9zM1 3h10" stroke="#8fb0f8" strokeWidth="1.5" /></Svg></WinButton>
          <WinButton aria-label="关闭"><Svg w={12} h={12}><path d="M2.500 2.500l7 7M9.500 2.500l-7 7" stroke="#8fb0f8" strokeWidth="2.5" /></Svg></WinButton>
        </WindowShape>
      </WindowTab>
      <Toolbar>
        <IconButton aria-label="回车"><EnterIcon /></IconButton>
        <Command><input aria-label="命令" /></Command>
        <IconButton aria-label="折叠"><CollapseIcon /></IconButton>
        <IconButton aria-label="保存"><SaveIcon /></IconButton>
        <Separator />
        <IconButton aria-label="返回"><BackIcon /></IconButton>
        <IconButton aria-label="退出"><ExitIcon /></IconButton>
        <IconButton aria-label="取消"><CancelIcon /></IconButton>
        <Separator />
        <IconButton aria-label="打印"><PrintIcon /></IconButton>
        <IconButton aria-label="查找"><FindIcon /></IconButton>
        <IconButton aria-label="继续查找"><FindIcon plus /></IconButton>
        <Separator />
        <IconButton aria-label="首页"><PageNavIcon><Chevron d={FIRST_A} /><Chevron d={FIRST_B} /></PageNavIcon></IconButton>
        <IconButton aria-label="上一页"><PageNavIcon><Chevron d={PREV} /></PageNavIcon></IconButton>
        <IconButton aria-label="下一页"><PageNavIcon><Chevron d={NEXT} /></PageNavIcon></IconButton>
        <IconButton aria-label="末页"><PageNavIcon><Chevron d={LAST_A} /><Chevron d={LAST_B} /></PageNavIcon></IconButton>
        <Separator />
        <IconButton aria-label="新会话"><SessionIcon /></IconButton>
        <IconButton aria-label="快捷方式"><ShortcutIcon /></IconButton>
        <Separator />
        <IconButton aria-label="帮助"><HelpIcon /></IconButton>
        <IconButton aria-label="布局"><LayoutIcon /></IconButton>
      </Toolbar>

      <Gap>
        <Frame>
          <TitleBar><span>发货 其他</span> - YIHUI</TitleBar>
          <AppToolbar>
            <TextButton $after={9}>隐藏概述</TextButton>
            <Separator />
            <TextButton $before={4} $after={5} aria-label="新建"><NewPageIcon /></TextButton>
            <Separator />
            <TextButton $before={7}>暂存</TextButton>
            <TextButton>检查</TextButton>
            <TextButton $after={9}>过账</TextButton>
            <Separator />
            <TextButton $before={4}><InfoIcon />帮助</TextButton>
          </AppToolbar>
          <Body>
            <Side>
              <SideTools>
                <YellowButton $w={24} aria-label="展开"><ExpandIcon /></YellowButton>
                <YellowButton $w={24} aria-label="收起"><ShrinkIcon /></YellowButton>
                <SideSep />
                <YellowButton $w={24} aria-label="删除"><TrashIcon /></YellowButton>
                <SideSep />
                <YellowButton $w={24} aria-label="关闭概览"><CloseBoxIcon /></YellowButton>
              </SideTools>
              <SideHeader>我的文档</SideHeader>
              <Tree>
                {tree.map(g => (
                  <Branch key={g.name}>
                    <Node>{g.name}</Node>
                    <ul>{g.items.map(t => <Leaf key={t} $dark={t === '空白'}>{t}</Leaf>)}</ul>
                  </Branch>
                ))}
              </Tree>
            </Side>
            <Splitter />
            <Work>
              <Scroll>
                <Inner>
                  <SelectRow>
                    <Select w={151} label="业务" value="A07 发货" />
                    <Select w={151} label="参考" value="R10 其他" />
                    <InitialEntry>
                      <label htmlFor="init">库存余额的初始条目</label>
                      <Field id="init" $w={32} defaultValue="561" />
                      <Field $w={15} aria-label="特殊库存" />
                    </InitialEntry>
                  </SelectRow>

                  <Section>
                    <div><YellowButton $w={24} $open aria-label="抬头"><HeaderToggleIcon /></YellowButton></div>
                    <TabArea>
                      <Tabs>
                        <Tab $w={59} $on><span>常规</span></Tab>
                        <Tab $w={51} $second aria-label="合作伙伴"><PeopleIcon /></Tab>
                      </Tabs>
                      <TabLine />
                      <Panel>
                        <FormRow>
                          <Label $w={128} htmlFor="d1">凭证日期</Label><Field id="d1" $w={87} defaultValue="2018-11-05" />
                          <Label $w={129} $gap={56} htmlFor="m1">物料单</Label><Field id="m1" $w={135} />
                        </FormRow>
                        <FormRow>
                          <Label $w={128} htmlFor="d2">过帐日期</Label><Field id="d2" $w={87} defaultValue="2018-11-05" />
                          <Label $w={129} $gap={56} htmlFor="m2">凭证抬头文本</Label><Field id="m2" $w={207} />
                        </FormRow>
                        <PrintRow>
                          <PrintIcon c="#111" f="#8fb0d0" />
                          <Check type="checkbox" aria-label="打印单据" />
                          <Select w={151} label="单据类型" value="1 个别单据" />
                        </PrintRow>
                      </Panel>
                    </TabArea>
                  </Section>

                  <GridBox>
                    <GridTop>
                      <Items>
                        <colgroup>{columns.map(([n, w]) => <Col key={n} $w={w} />)}</colgroup>
                        <thead><tr>{columns.map(([n]) => <th key={n} scope="col">{n}</th>)}</tr></thead>
                        <tbody>
                          <tr>
                            <td><YellowButton $w={44}>1</YellowButton></td>
                            <Cell>成品0045</Cell>
                            <Cell><Check type="checkbox" aria-label="保留" /></Cell>
                            <Cell $indent={8}><Check type="checkbox" defaultChecked aria-label="确定" /></Cell>
                            <Cell $mono $indent={1}>1,000</Cell>
                            <Cell $dark>PC</Cell>
                            <Cell>南京主机仓</Cell>
                            <td /><td /><td />
                            <Cell $mono $dark>561</Cell>
                            <Cell>+</Cell>
                            <Cell $large $indent={8}>非限制</Cell>
                          </tr>
                          {[0, 1].map(r => <tr key={r}>{columns.map(([n]) => <td key={n} />)}</tr>)}
                        </tbody>
                      </Items>
                      <GridSide>
                        <TableCfgIcon />
                        <SideTrack />
                        <ArrowBtn $dir="up" aria-label="上" />
                        <ArrowBtn $dir="down" aria-label="下" />
                      </GridSide>
                    </GridTop>
                    <HBar $inset>
                      <ArrowBtn $dir="left" aria-label="左" /><ArrowBtn $dir="right" aria-label="右" />
                      <HThumb $small />
                      <HTrack />
                      <ArrowBtn $dir="left" aria-label="左" /><ArrowBtn $dir="right" aria-label="右" />
                    </HBar>
                  </GridBox>

                  <ActionRow>
                    <YellowButton $w={22} $open aria-label="升序"><SortAscIcon b="#a8c040" /></YellowButton>
                    <YellowButton $w={22} $open aria-label="降序"><SortDescIcon /></YellowButton>
                    <Field $w={167} aria-label="搜索" />
                    <YellowButton $w={22} $open aria-label="查找"><FindIcon c="#222" f="#8f96c0" /></YellowButton>
                    <YellowButton $w={22} $open aria-label="继续查找"><FindIcon plus c="#222" f="#8f96c0" /></YellowButton>
                    <LabelledButton className="lead" $w={110} $open><TrashIcon /><span>删除</span></LabelledButton>
                    <LabelledButton $w={110} $open><CopyIcon /><span>内容</span></LabelledButton>
                    <YellowButton className="lead" $w={22} $open aria-label="分配"><CrossArrowsIcon /></YellowButton>
                    <YellowButton $w={22} $open aria-label="层次"><HierIcon /></YellowButton>
                    <YellowButton $w={22} $open aria-label="包装"><BoxIcon /></YellowButton>
                  </ActionRow>

                  <Section $grow>
                    <div><YellowButton $w={24} $open aria-label="明细"><HeaderToggleIcon /></YellowButton></div>
                    <TabArea>
                      <Tabs><Tab $w={64}><span>物料</span></Tab></Tabs>
                      <TabLine />
                      <Panel $open>
                        <FormRow><Label as="span" $w={169}>移动类型</Label></FormRow>
                        <FormRow />
                        <FormRow><Label as="span" $w={169}>工厂</Label></FormRow>
                        <FormRow><Label as="span" $w={169}>库存地点</Label></FormRow>
                        <FormRow />
                        <FormRow><Label $w={169} htmlFor="u1">卸货点</Label><Field id="u1" $w={207} /></FormRow>
                      </Panel>
                    </TabArea>
                  </Section>
                </Inner>
              </Scroll>
              <VBar>
                <ArrowBtn $dir="up" aria-label="上" /><ArrowBtn $dir="down" aria-label="下" />
                <VThumb><Grip /></VThumb>
                <VTrack />
                <ArrowBtn $dir="up" aria-label="上" /><ArrowBtn $dir="down" aria-label="下" />
              </VBar>
              <HBar>
                <ArrowBtn $dir="left" aria-label="左" /><ArrowBtn $dir="right" aria-label="右" />
                <HThumb><Grip /></HThumb>
                <HTrack $w={14} />
                <ArrowBtn $dir="left" aria-label="左" /><ArrowBtn $dir="right" aria-label="右" />
              </HBar>
              <Corner />
            </Work>
          </Body>
        </Frame>
      </Gap>

      <Status>
        <LogoSlot><SapLogo /></LogoSlot>
        <StatusRight>
          <SendIcon /><Bar /><span>300</span><Caret /><Bar /><span>SAPDEV</span><Bar /><span>INS</span><Bar />
          <Bar $far /><SwapSlot><SwapIcon /></SwapSlot><Bar /><LockIcon />
        </StatusRight>
      </Status>
      <BottomEdge />

      <Ime>
        <ImeLogo>
          <Svg w={29} h={28}>
            <g transform="rotate(-9 14.5 14)"><rect x="2" y="2" width="25" height="24" rx="3" fill="#f2501e" />
              <path d="M23 8.500c-4-2-14-3-14 1.200 0 4 13 2 13 7.300 0 4.500-11 4.500-16 2" stroke="#fff" strokeWidth="4.5" /></g>
          </Svg>
        </ImeLogo>
        <ImeMode>中</ImeMode>
        <button aria-label="标点"><Svg><circle cx="4" cy="6" r="2" stroke="#1d72c9" strokeWidth="1.5" /><circle cx="11.5" cy="9" r="2" fill="#1d72c9" /><path d="M13 9c0 2-1 3.500-3 4.500" stroke="#1d72c9" strokeWidth="1.5" /></Svg></button>
        <button aria-label="表情"><Svg><circle cx="8" cy="8" r="7" stroke="#1d72c9" strokeWidth="1.8" /><path d="M5.500 4.500v3M10.500 4.500v3" stroke="#1d72c9" strokeWidth="1.6" /><path d="M4 9.500c2 3.500 6 3.500 8 0" stroke="#1d72c9" strokeWidth="1.4" /></Svg></button>
        <button aria-label="语音"><Svg><rect x="5" y="0" width="6" height="10" rx="3" fill="#1d72c9" /><path d="M2.500 6.500c0 7 11 7 11 0M8 12v3M5 15.200h6" stroke="#1d72c9" strokeWidth="1.6" /></Svg></button>
        <button aria-label="键盘"><Svg><rect x="0" y="2" width="16" height="12" rx="2" fill="#1d72c9" /><path d="M2 5.500h12M2 8.500h12" stroke="#fff" strokeWidth="1.5" strokeDasharray="2 1" /><path d="M4 11.500h8" stroke="#fff" strokeWidth="1.5" /></Svg></button>
        <button aria-label="用户"><Svg><circle cx="7" cy="4" r="3.5" fill="#b4bfd2" /><path d="M1 14c0-7 12-7 12 0z" fill="#b4bfd2" /><rect x="8.5" y="8.5" width="6" height="6" fill="#fff" stroke="#b4bfd2" strokeWidth="1.4" /></Svg></button>
        <button aria-label="皮肤"><Svg><path d="M5 1c1 2 5 2 6 0l5 3-2 4-2-1v8H4V7L2 8 0 4z" fill="#1d72c9" /></Svg></button>
        <button aria-label="工具箱"><Svg><path d="M1 1h6v6H1zM1 9h6v6H1zM9 9h6v6H9z" fill="#1d72c9" /><rect x="9.8" y="1.8" width="4.5" height="4.5" stroke="#1d72c9" strokeWidth="1.5" /></Svg></button>
      </Ime>

      <Meter>
        <Gauge>
          <Svg w={58} h={58}>
            <defs><linearGradient id="arc" x1="0" y1="0" x2="0" y2="1"><stop offset="0" stopColor="#48d8e0" /><stop offset=".5" stopColor="#78e0a0" /><stop offset="1" stopColor="#e8d840" /></linearGradient></defs>
            <path d="M29 4a25 25 0 1 1-17.500 43" stroke="url(#arc)" strokeWidth="1.5" />
          </Svg>
          62<small>%</small>
        </Gauge>
        <Rates>
          <div><Svg w={8} h={8}><path d="M4 8V1.500M1 4.500l3-3 3 3" stroke="#3fb4f4" strokeWidth="1.4" /></Svg><span>0<small>K/s</small></span></div>
          <div><Svg w={8} h={8}><path d="M4 0v6.500M1 3.500l3 3 3-3" stroke="#30b050" strokeWidth="1.4" /></Svg><span>0.1<small>K/s</small></span></div>
        </Rates>
      </Meter>

      <Dialog role="dialog" aria-label="显示日志">
        <DialogTitle>
          <MenuIcon color="#fff" />
          <span>显示日志</span>
          <WinButton aria-label="关闭"><Svg w={12} h={12}><path d="M2.500 2.500l7 7M9.500 2.500l-7 7" stroke="#a9c8ff" strokeWidth="2" /></Svg></WinButton>
        </DialogTitle>
        <LogArea>
          <LogTable>
            <colgroup><Col $w={32} /><Col $w={40} /><Col /><Col $w={40} /></colgroup>
            <thead>
              <tr>
                <th scope="col"><Fill $c="#a6e6f5">类<Half>&gt;</Half></Fill></th>
                <th scope="col"><Fill $c="#a6e6f5">项目</Fill></th>
                <th scope="col"><Fill $c="#a6e6f5">消息文本</Fill></th>
                <th scope="col"><Fill $c="#a6e6f5">长<Half>&gt;</Half></Fill></th>
              </tr>
            </thead>
            <tbody>
              <tr>
                <td><Fill $c="#a5c5ec"><ErrorIcon /></Fill></td>
                <td><Fill $c="#fff" /></td>
                <td>
                  <Fill $c="#fff">
                    只能在公司代码<Half> 8200 </Half>的期间<Half> 2018/06 </Half>和<Half> 2018/05 </Half>中记帐
                  </Fill>
                </td>
                <td><Fill $c="transparent"><HelpIcon c="#222" f="#f8d820" /></Fill></td>
              </tr>
            </tbody>
          </LogTable>
        </LogArea>
        <DialogButtons>
          <YellowButton $w={20} aria-label="继续"><CheckIcon /></YellowButton>
          <YellowButton $w={20} aria-label="长文本"><HelpIcon c="#222" f="#f8c820" /></YellowButton>
          <LabelledButton $w={82}><GlassesIcon /><span>技术信息</span></LabelledButton>
          <YellowButton $w={20} aria-label="最前"><PlayIcon left bar /></YellowButton>
          <YellowButton $w={20} aria-label="向前"><PlayIcon left /></YellowButton>
          <YellowButton $w={20} aria-label="向后"><PlayIcon /></YellowButton>
          <YellowButton $w={20} aria-label="最后"><PlayIcon bar /></YellowButton>
          <YellowButton $w={20} aria-label="过滤"><FilterIcon /></YellowButton>
          <YellowButton $w={20} aria-label="升序"><SortAscIcon /></YellowButton>
          <YellowButton $w={20} aria-label="降序"><SortDescIcon /></YellowButton>
          <LabelledButton $w={106}><StackIcon /><span>当前显示变式</span></LabelledButton>
          <YellowButton $w={20} aria-label="选择变式"><StackIcon /></YellowButton>
          <YellowButton $w={20} aria-label="保存变式"><StackIcon /></YellowButton>
          <LabelledButton $w={58}><PrintIcon c="#111" f="#b8c8e0" /><span>打印</span></LabelledButton>
          <YellowButton $w={20} aria-label="查找"><FindIcon c="#222" f="#8f96c0" /></YellowButton>
          <YellowButton $w={20} aria-label="继续查找"><FindIcon plus c="#222" f="#8f96c0" /></YellowButton>
          <CountButton $w={41}><StopIcon /><span>0</span></CountButton>
          <CountButton $w={41}><ErrorIcon /><span>1</span></CountButton>
          <CountButton $w={41}><WarnIcon /><span>0</span></CountButton>
          <CountButton $w={41}><OkIcon /><span>0</span></CountButton>
          <LabelledButton $w={58}><InfoIcon /><span>帮助</span></LabelledButton>
          <YellowButton $w={20} aria-label="取消"><RedXIcon /></YellowButton>
        </DialogButtons>
      </Dialog>
    </Page>
  );
}
